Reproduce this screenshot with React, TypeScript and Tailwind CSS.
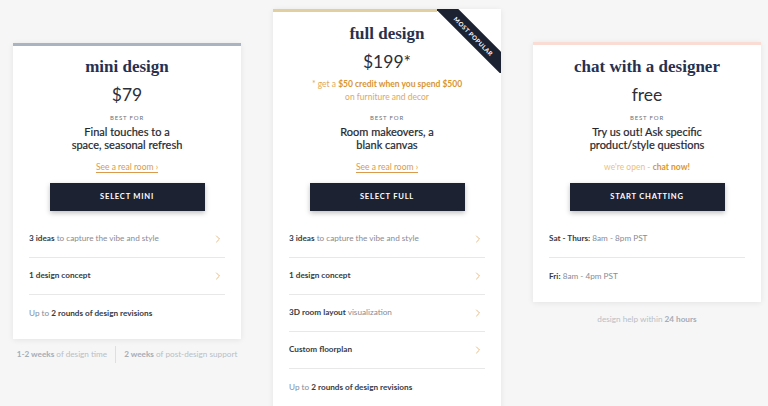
import React from 'react';
import { ChevronRight } from 'lucide-react';

const sans = { fontFamily: 'Lato, "Open Sans", sans-serif' };

type Row = { bold?: string; rest?: string; pre?: string; chevron?: boolean };

function Feature({ row, last }: { row: Row; last?: boolean }) {
  return (
    <div
      className={`h-[37px] flex items-center justify-between text-[8.2px] ${
        last ? '' : 'border-b border-[#e8e8e8]'
      }`}
    >
      <span className="text-[#878c95]">
        {row.pre}
        {row.bold && <span className="font-bold text-[#373b44]">{row.bold}</span>}
        {row.rest}
      </span>
      {row.chevron && (
        <ChevronRight className="w-[12px] h-[12px] text-[#e3a862] mr-[1px]" strokeWidth={1.6} />
      )}
    </div>
  );
}

function CardHead({
  title,
  price,
  desc,
  bestMt = 'mt-[5px]',
  children,
}: {
  title: string;
  price: string;
  desc: string[];
  bestMt?: string;
  children?: React.ReactNode;
}) {
  return (
    <>
      <h2
        className="text-[17px] leading-[20px] font-bold text-[#27314f] text-center"
        style={{ fontFamily: '"Liberation Serif", "DejaVu Serif", serif' }}
      >
        {title}
      </h2>
      <div className="text-[17.5px] leading-[26px] text-[#2b2f3a] text-center mt-[5px]">{price}</div>
      {children}
      <div className={`text-[6px] leading-[10px] tracking-[0.14em] text-[#6d717a] text-center ${bestMt}`}>
        BEST FOR
      </div>
      <div className="text-[11px] leading-[13px] text-[#24272e] text-center mt-[1.5px] [-webkit-text-stroke:0.2px_#24272e]">
        {desc.map((d) => (
          <div key={d}>{d}</div>
        ))}
      </div>
    </>
  );
}

function SelectButton({ label }: { label: string }) {
  return (
    <button className="mx-auto block w-[155px] h-[28px] bg-[#1d2233] text-white text-[7.6px] font-bold tracking-[0.1em] shadow-[0_2px_5px_rgba(0,0,0,0.25)]">
      {label}
    </button>
  );
}

function RealRoom() {
  return (
    <div className="mt-[10px] text-center text-[8.5px] leading-[12px] text-[#d99a4e] underline underline-offset-2">
      See a real room ›
    </div>
  );
}

export default function App() {
  const miniRows: Row[] = [
    { bold: '3 ideas', rest: ' to capture the vibe and style', chevron: true },
    { bold: '1 design concept', chevron: true },
    { pre: 'Up to ', bold: '2 rounds of design revisions' },
  ];
  const fullRows: Row[] = [
    { bold: '3 ideas', rest: ' to capture the vibe and style', chevron: true },
    { bold: '1 design concept', chevron: true },
    { bold: '3D room layout', rest: ' visualization', chevron: true },
    { bold: 'Custom floorplan', chevron: true },
    { pre: 'Up to ', bold: '2 rounds of design revisions' },
  ];

  return (
    <div className="w-full h-[406px] bg-[#f6f6f6] overflow-hidden flex items-start gap-[32px] px-[13px]" style={sans}>
      {/* mini */}
      <div className="w-[228px] mt-[43px] shrink-0">
        <div className="bg-white border-t-[3px] border-[#aab3bf] shadow-[0_1px_6px_rgba(0,0,0,0.08)] pt-[11px] pb-[7px]">
          <CardHead title="mini design" price="$79" desc={['Final touches to a', 'space, seasonal refresh']} />
          <RealRoom />
          <div className="mt-[10px]">
            <SelectButton label="SELECT MINI" />
          </div>
          <div className="mt-[10px] px-[16px]">
            {miniRows.map((r, i) => (
              <Feature key={i} row={r} last={i === miniRows.length - 1} />
            ))}
          </div>
        </div>
        <div className="mt-[7px] flex items-center justify-center whitespace-nowrap text-[8.2px] text-[#b9bec6]">
          <span>
            <span className="font-bold text-[#a6acb5]">1-2 weeks</span> of design time
          </span>
          <span className="w-px h-[17px] bg-[#dcdfe3] mx-[8px]" />
          <span>
            <span className="font-bold text-[#a6acb5]">2 weeks</span> of post-design support
          </span>
        </div>
      </div>

      {/* full */}
      <div className="w-[228px] mt-[9px] shrink-0">
        <div className="relative bg-white border-t-[3px] border-[#e2cf9f] shadow-[0_1px_6px_rgba(0,0,0,0.08)] pt-[12px] pb-[7px]">
          <div className="absolute -top-[3px] right-0 w-[64px] h-[64px] overflow-hidden bg-white">
            <div className="absolute left-[-9px] top-[19px] w-[92px] h-[16px] bg-[#1d2233] rotate-45 flex items-center justify-center text-white text-[6px] font-bold tracking-[0.08em]">
              MOST POPULAR
            </div>
          </div>
          <CardHead
            title="full design"
            price="$199*"
            desc={['Room makeovers, a', 'blank canvas']}
            bestMt="mt-[9px]"
          >
            <div className="mt-[3px] text-[8.5px] leading-[13px] text-center text-[#e0a85c]">
              <div>
                * get a <span className="font-bold text-[#d9952f]">$50 credit when you spend $500</span>
              </div>
              <div>on furniture and decor</div>
            </div>
          </CardHead>
          <RealRoom />
          <div className="mt-[10px]">
            <SelectButton label="SELECT FULL" />
          </div>
          <div className="mt-[10px] px-[16px]">
            {fullRows.map((r, i) => (
              <Feature key={i} row={r} last={i === fullRows.length - 1} />
            ))}
          </div>
        </div>
      </div>

      {/* chat */}
      <div className="w-[228px] mt-[42px] shrink-0">
        <div className="bg-white border-t-[3px] border-[#fbdcd5] shadow-[0_1px_6px_rgba(0,0,0,0.08)] pt-[12px] pb-[7px]">
          <CardHead
            title="chat with a designer"
            price="free"
            desc={['Try us out! Ask specific', 'product/style questions']}
          />
          <div className="mt-[10px] text-center text-[8.5px] leading-[12px] text-[#ecbf83]">
            we're open - <span className="font-bold text-[#d9982f]">chat now!</span>
          </div>
          <div className="mt-[10px]">
            <SelectButton label="START CHATTING" />
          </div>
          <div className="mt-[10px] px-[16px]">
            <Feature row={{ bold: 'Sat - Thurs:', rest: ' 8am - 8pm PST' }} />
            <Feature row={{ bold: 'Fri:', rest: ' 8am - 4pm PST' }} last />
          </div>
        </div>
        <div className="mt-[11px] text-center text-[8.2px] text-[#b9bec6]">
          design help within <span className="font-bold text-[#a6acb5]">24 hours</span>
        </div>
      </div>
    </div>
  );
}
